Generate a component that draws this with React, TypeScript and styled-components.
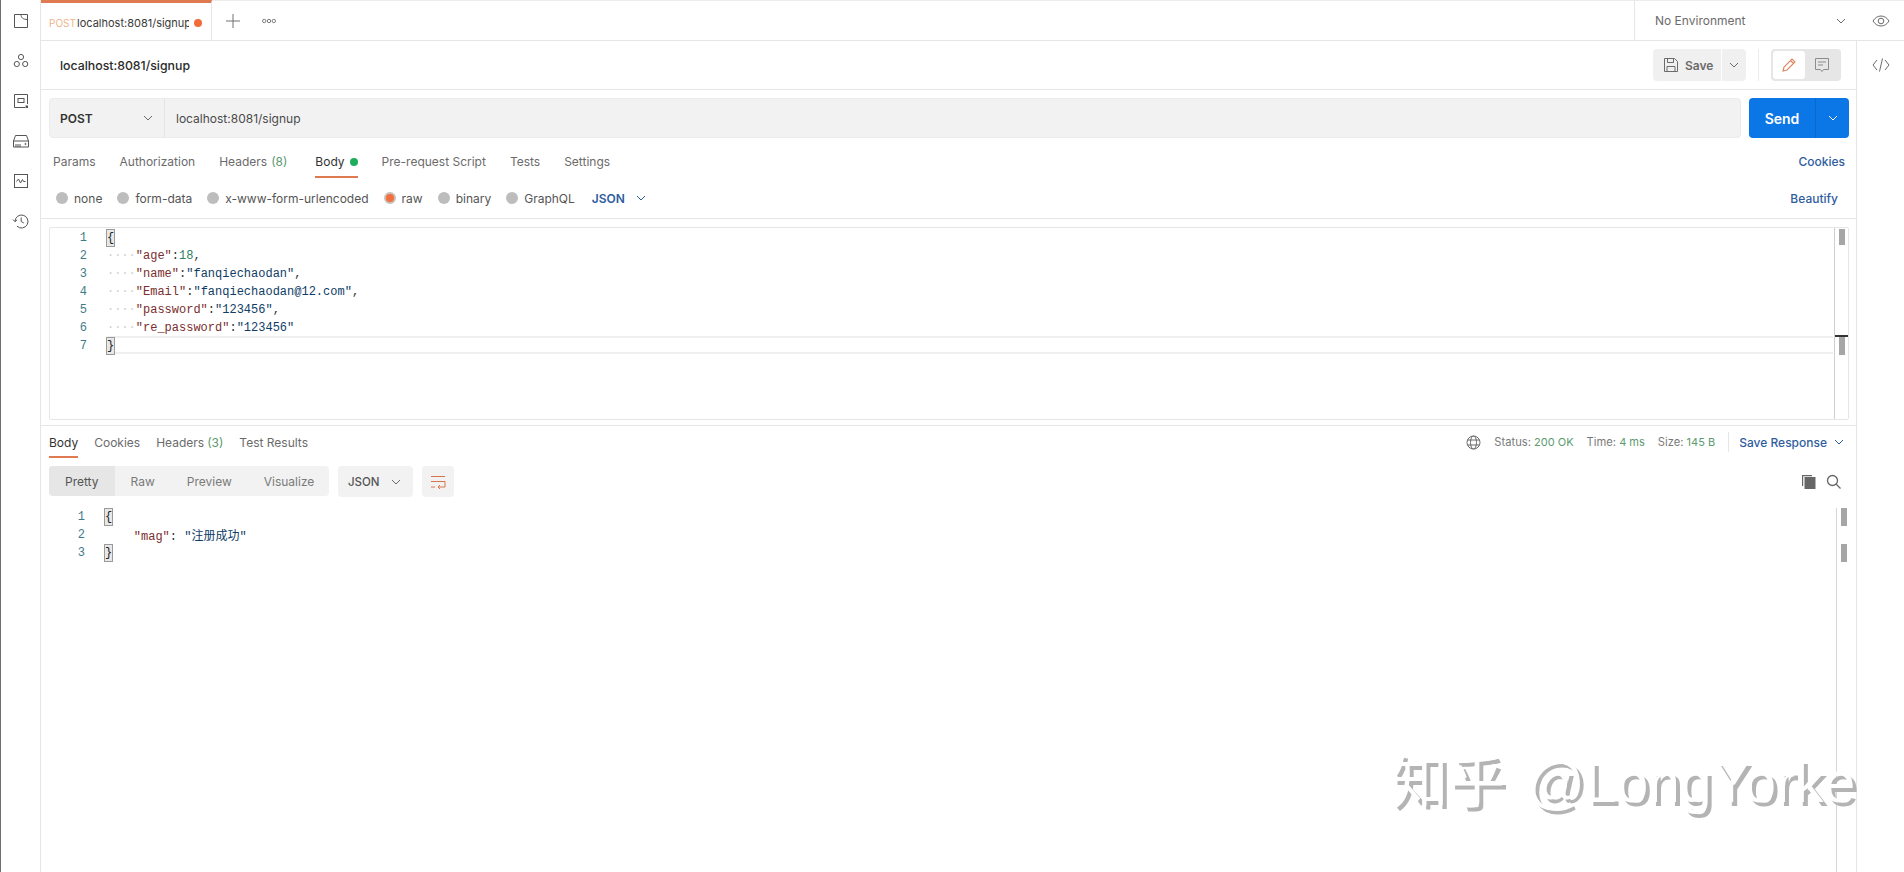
import React from "react";
import styled, { createGlobalStyle } from "styled-components";

const GlobalStyle = createGlobalStyle`
  html, body { margin: 0; padding: 0; background: #fff; }
  body { font-family: Inter, "Noto Sans", sans-serif; font-size: 12px; color: #212121; }
  * { box-sizing: border-box; }
`;

const Chevron = ({ color = "#6b6b6b" }: { color?: string }) => (
  <svg width="12" height="12" viewBox="0 0 12 12" fill="none" stroke={color} strokeWidth="1">
    <path d="M2 4l4 4 4-4" />
  </svg>
);

const sideIcons = [
  <path key="a" d="M2.5 2.5h13v13h-13zM9 2.5c0 3 2 5 6.5 5" />,
  <g key="b"><circle cx="9" cy="5" r="2.6" /><circle cx="4.8" cy="12" r="2.6" /><circle cx="13.2" cy="12" r="2.6" /></g>,
  <g key="c"><path d="M13 15.5H2.5v-13h13V12" /><rect x="6" y="6.5" width="6" height="4" /><rect x="13.5" y="13.5" width="2.5" height="2.5" fill="#555" stroke="none" /></g>,
  <g key="d"><path d="M1.5 9l2-5.5h11l2 5.5v6h-15zM1.5 9h15M4 15v-3M6 15v-3M8 15v-3" /><circle cx="13.5" cy="12" r=".6" /></g>,
  <g key="e"><rect x="2.5" y="2.5" width="13" height="13" /><path d="M4.5 9.5l2-2.5 2 4 2-3.5 1 2h2" /></g>,
  <g key="f"><path d="M3 9.5a6.5 6.5 0 1 1 2 4.7M1 7.5l2 2.2 2.2-2M9.2 5.5v4l2.6 1.5" /></g>,
];

function App() {
  return (
    <>
      <GlobalStyle />
      <Page>
        <Sidebar>
          {sideIcons.map((icon, i) => (
            <SideIcon key={i} width="18" height="18" viewBox="0 0 18 18">{icon}</SideIcon>
          ))}
        </Sidebar>

        <Content>
          <TabBar>
            <ActiveTab>
              <TabMethod>POST</TabMethod>
              <TabUrl>localhost:8081/signup</TabUrl>
              <Dot $color="#f26b3a" $size={8} $gap={5} />
            </ActiveTab>
            <PlusIcon width="14" height="14" viewBox="0 0 14 14"><path d="M7 0v14M0 7h14" /></PlusIcon>
            <MoreIcon width="14" height="6" viewBox="0 0 14 6">
              <circle cx="2.2" cy="3" r="1.7" /><circle cx="7" cy="3" r="1.7" /><circle cx="11.8" cy="3" r="1.7" />
            </MoreIcon>
            <EnvPicker>
              <EnvLabel>No Environment</EnvLabel>
              <Chevron />
            </EnvPicker>
            <EyeBox>
              <GreyIcon width="18" height="18" viewBox="0 0 18 18">
                <path d="M1 9c2-3.4 5-5 8-5s6 1.6 8 5c-2 3.4-5 5-8 5s-6-1.6-8-5z" />
                <circle cx="9" cy="9" r="2.8" />
              </GreyIcon>
            </EyeBox>
          </TabBar>

          <Body>
            <Main>
              <TitleRow>
                <Title>localhost:8081/signup</Title>
                <SaveGroup>
                  <SaveButton>
                    <GreyIcon width="16" height="16" viewBox="0 0 16 16">
                      <path d="M1.5 1.5h10l3 3v10h-13zM4.5 1.5v4h6v-4M4 14.5v-5h8v5" />
                    </GreyIcon>
                    Save
                  </SaveButton>
                  <SaveCaret><Chevron /></SaveCaret>
                </SaveGroup>
                <VDivider />
                <ModeToggle>
                  <ModeActive>
                    <svg width="16" height="16" viewBox="0 0 16 16" fill="none" stroke="#d9875f" strokeWidth="1.1">
                      <path d="M2 14l1-4 8-8 3 3-8 8zM9.5 3.5l3 3" />
                    </svg>
                  </ModeActive>
                  <ModeIdle>
                    <svg width="16" height="16" viewBox="0 0 16 16" fill="none" stroke="#8c8c8c" strokeWidth="1">
                      <path d="M1.5 1.5h13v11H9.5L8 14.5l-1.5-2h-5zM4 5h8M4 8h5" />
                    </svg>
                  </ModeIdle>
                </ModeToggle>
              </TitleRow>

              <UrlRow>
                <UrlBox>
                  <MethodSelect>
                    POST
                    <Chevron />
                  </MethodSelect>
                  <UrlText>localhost:8081/signup</UrlText>
                </UrlBox>
                <SendGroup>
                  <SendLabel>Send</SendLabel>
                  <SendCaret><Chevron color="#fff" /></SendCaret>
                </SendGroup>
              </UrlRow>

              <RequestTabs>
                <ReqTab>Params</ReqTab>
                <ReqTab>Authorization</ReqTab>
                <ReqTab>Headers <Count>(8)</Count></ReqTab>
                <ReqTab $active>Body <Dot $color="#1ead5c" $size={8} $gap={1} /></ReqTab>
                <ReqTab>Pre-request Script</ReqTab>
                <ReqTab>Tests</ReqTab>
                <ReqTab>Settings</ReqTab>
                <CookiesLink>Cookies</CookiesLink>
              </RequestTabs>

              <BodyTypes>
                <RadioItem><Radio />none</RadioItem>
                <RadioItem><Radio />form-data</RadioItem>
                <RadioItem><Radio />x-www-form-urlencoded</RadioItem>
                <RadioItem><Radio $on />raw</RadioItem>
                <RadioItem><Radio />binary</RadioItem>
                <RadioItem><Radio />GraphQL</RadioItem>
                <LangSelect>JSON <Chevron color="#2f5d9e" /></LangSelect>
                <BeautifyLink>Beautify</BeautifyLink>
              </BodyTypes>

              <EditorWrap>
                <Line><Num>1</Num><Code><Bracket>{"{"}</Bracket></Code></Line>
                <Line><Num>2</Num><Code><Ws>····</Ws><Key>"age"</Key>:<NumVal>18</NumVal>,</Code></Line>
                <Line><Num>3</Num><Code><Ws>····</Ws><Key>"name"</Key>:<Str>"fanqiechaodan"</Str>,</Code></Line>
                <Line><Num>4</Num><Code><Ws>····</Ws><Key>"Email"</Key>:<Str>"fanqiechaodan@12.com"</Str>,</Code></Line>
                <Line><Num>5</Num><Code><Ws>····</Ws><Key>"password"</Key>:<Str>"123456"</Str>,</Code></Line>
                <Line><Num>6</Num><Code><Ws>····</Ws><Key>"re_password"</Key>:<Str>"123456"</Str></Code></Line>
                <Line><Num>7</Num><CurrentCode><Bracket>{"}"}</Bracket></CurrentCode></Line>
                <ScrollTrack>
                  <Thumb $top={1} $height={16} />
                  <CursorMark />
                  <Thumb $top={109} $height={18} />
                </ScrollTrack>
              </EditorWrap>

              <ResponseTabs>
                <ResTab $active>Body</ResTab>
                <ResTab>Cookies</ResTab>
                <ResTab>Headers <Count>(3)</Count></ResTab>
                <ResTab>Test Results</ResTab>
                <StatusBar>
                  <GreyIcon width="15" height="15" viewBox="0 0 15 15">
                    <circle cx="7.5" cy="7.5" r="6.5" />
                    <ellipse cx="7.5" cy="7.5" rx="3" ry="6.5" />
                    <path d="M1.5 5h12M1.5 10h12" />
                  </GreyIcon>
                  <StatusItem>Status: <Good>200 OK</Good></StatusItem>
                  <StatusItem>Time: <Good>4 ms</Good></StatusItem>
                  <StatusItem>Size: <Good>145 B</Good></StatusItem>
                  <StatusDivider />
                  <SaveResponse>Save Response</SaveResponse>
                  <Chevron color="#2f5d9e" />
                </StatusBar>
              </ResponseTabs>

              <ResponseTools>
                <Segments>
                  <Segment $active>Pretty</Segment>
                  <Segment>Raw</Segment>
                  <Segment>Preview</Segment>
                  <Segment>Visualize</Segment>
                </Segments>
                <FormatSelect>JSON <Chevron /></FormatSelect>
                <WrapButton>
                  <svg width="16" height="16" viewBox="0 0 16 16" fill="none" stroke="#d9744a" strokeWidth="1">
                    <path d="M1 2.5h14M1 7.5h14M1 13h4M15 7.5v5.5h-7M10 11l-2 2 2 2" />
                  </svg>
                </WrapButton>
                <ToolIcons>
                  <svg width="15" height="15" viewBox="0 0 15 15" fill="#666">
                    <path d="M3.5 3h11v12h-11z" /><path d="M1 1h10v1.2H2.2V12H1z" />
                  </svg>
                  <svg width="15" height="15" viewBox="0 0 15 15" fill="none" stroke="#666" strokeWidth="1.3">
                    <circle cx="6.5" cy="6.5" r="5" /><path d="M10 10l4.5 4.5" />
                  </svg>
                </ToolIcons>
              </ResponseTools>

              <ResponseBody>
                <ResLine><ResNum>1</ResNum><Code><Bracket>{"{"}</Bracket></Code></ResLine>
                <ResLine><ResNum>2</ResNum><Code>{"    "}<Key>"mag"</Key>: <Str>"注册成功"</Str></Code></ResLine>
                <ResLine><ResNum>3</ResNum><Code><Bracket>{"}"}</Bracket></Code></ResLine>
                <ResTrack>
                  <Thumb $top={0} $height={18} />
                  <Thumb $top={36} $height={18} />
                </ResTrack>
              </ResponseBody>
            </Main>

            <RightRail>
              <GreyIcon width="18" height="14" viewBox="0 0 18 14">
                <path d="M5 2L1 7l4 5M13 2l4 5-4 5M10.5 0.5l-3 13" />
              </GreyIcon>
            </RightRail>
          </Body>
        </Content>

        <Watermark>知乎 @LongYorke</Watermark>
      </Page>
    </>
  );
}

const Page = styled.div`
  position: relative;
  display: flex;
  width: 1904px;
  height: 872px;
  overflow: hidden;
  border-left: 1px solid #6e6e6e;
  background: #fff;
`;

const Sidebar = styled.nav`
  width: 40px;
  flex: none;
  display: flex;
  flex-direction: column;
  align-items: center;
  gap: 22px;
  padding-top: 12px;
  border-right: 1px solid #e6e6e6;
`;

const SideIcon = styled.svg`
  fill: none;
  stroke: #555;
  stroke-width: 1;
`;

const GreyIcon = styled.svg`
  flex: none;
  fill: none;
  stroke: #6b6b6b;
  stroke-width: 1;
`;

const Content = styled.div`
  flex: 1;
  min-width: 0;
  display: flex;
  flex-direction: column;
`;

const TabBar = styled.div`
  height: 41px;
  flex: none;
  display: flex;
  align-items: center;
  border-top: 1px solid #ececec;
  border-bottom: 1px solid #e6e6e6;
`;

const ActiveTab = styled.div`
  width: 171px;
  height: 40px;
  margin-top: -1px;
  display: flex;
  align-items: center;
  padding: 3px 9px 0 8px;
  border-top: 3px solid #e07a52;
  border-right: 1px solid #e6e6e6;
`;

const TabMethod = styled.span`
  font-size: 10px;
  color: #f0b48f;
  width: 28px;
  flex: none;
`;

const TabUrl = styled.span`
  width: 112px;
  flex: none;
  overflow: hidden;
  white-space: nowrap;
  font-size: 11px;
  color: #3a3a3a;
`;

const Dot = styled.span<{ $color: string; $size: number; $gap: number }>`
  display: inline-block;
  flex: none;
  width: ${(p) => p.$size}px;
  height: ${(p) => p.$size}px;
  margin-left: ${(p) => p.$gap}px;
  border-radius: 50%;
  background: ${(p) => p.$color};
`;

const PlusIcon = styled.svg`
  margin-left: 14px;
  fill: none;
  stroke: #707070;
  stroke-width: 1;
`;

const MoreIcon = styled.svg`
  margin-left: 22px;
  fill: none;
  stroke: #707070;
  stroke-width: 0.9;
`;

const EnvPicker = styled.div`
  margin-left: auto;
  width: 223px;
  height: 39px;
  display: flex;
  align-items: center;
  justify-content: space-between;
  padding: 0 10px 0 20px;
  border-left: 1px solid #e6e6e6;
`;

const EnvLabel = styled.span`
  font-size: 12px;
  color: #6b6b6b;
`;

const EyeBox = styled.div`
  width: 47px;
  display: flex;
  justify-content: center;
`;

const Body = styled.div`
  flex: 1;
  min-height: 0;
  display: flex;
`;

const Main = styled.main`
  width: 1816px;
  flex: none;
  display: flex;
  flex-direction: column;
  border-right: 1px solid #e6e6e6;
`;

const RightRail = styled.aside`
  flex: 1;
  display: flex;
  justify-content: center;
  padding-top: 17px;
`;

const TitleRow = styled.div`
  height: 49px;
  flex: none;
  display: flex;
  align-items: center;
  padding: 0 15px 0 19px;
  border-bottom: 1px solid #e6e6e6;
`;

const Title = styled.h1`
  margin: 0 auto 0 0;
  font-size: 12.3px;
  font-weight: 500;
  color: #2b2b2b;
`;

const SaveGroup = styled.div`
  display: flex;
  gap: 1px;
  height: 32px;
`;

const SaveButton = styled.div`
  width: 68px;
  display: flex;
  align-items: center;
  gap: 6px;
  padding-left: 10px;
  border-radius: 4px 0 0 4px;
  background: #f0f0f0;
  color: #6b6b6b;
  font-weight: 600;
`;

const SaveCaret = styled.div`
  width: 24px;
  display: flex;
  align-items: center;
  justify-content: center;
  border-radius: 0 4px 4px 0;
  background: #f0f0f0;
`;

const VDivider = styled.div`
  width: 1px;
  height: 32px;
  margin: 0 12px;
  background: #ececec;
`;

const ModeToggle = styled.div`
  width: 70px;
  height: 32px;
  display: flex;
  padding: 2px;
  border-radius: 4px;
  background: #e6e6e6;
`;

const ModeActive = styled.div`
  width: 32px;
  display: flex;
  align-items: center;
  justify-content: center;
  border-radius: 3px;
  background: #fff;
`;

const ModeIdle = styled.div`
  flex: 1;
  display: flex;
  align-items: center;
  justify-content: center;
`;

const UrlRow = styled.div`
  flex: none;
  display: flex;
  gap: 8px;
  padding: 8px 7px 0 8px;
`;

const UrlBox = styled.div`
  flex: 1;
  height: 40px;
  display: flex;
  align-items: center;
  border: 1px solid #ebebeb;
  border-radius: 4px;
  background: #f2f2f2;
`;

const MethodSelect = styled.div`
  width: 115px;
  height: 38px;
  flex: none;
  display: flex;
  align-items: center;
  justify-content: space-between;
  padding: 0 10px;
  border-right: 1px solid #e4e4e4;
  font-weight: 600;
  font-size: 12px;
  color: #333;
`;

const UrlText = styled.span`
  margin-left: 11px;
  font-size: 12px;
  color: #4a4a4a;
`;

const SendGroup = styled.div`
  width: 100px;
  height: 40px;
  flex: none;
  display: flex;
  border-radius: 4px;
  background: #0b76e6;
  color: #fff;
`;

const SendLabel = styled.div`
  width: 67px;
  display: flex;
  align-items: center;
  justify-content: center;
  border-right: 1px solid #0a69cc;
  font-size: 14px;
  font-weight: 600;
`;

const SendCaret = styled.div`
  flex: 1;
  display: flex;
  align-items: center;
  justify-content: center;
`;

const RequestTabs = styled.div`
  height: 40px;
  flex: none;
  display: flex;
  align-items: stretch;
  gap: 24px;
  padding-left: 12px;
`;

const ReqTab = styled.div<{ $active?: boolean }>`
  display: flex;
  align-items: center;
  gap: 4px;
  height: 40px;
  padding-top: 9px;
  margin-left: ${(p) => (p.$active ? 4 : 0)}px;
  color: ${(p) => (p.$active ? "#333" : "#6b6b6b")};
  border-bottom: 2px solid ${(p) => (p.$active ? "#e07a52" : "transparent")};
  white-space: nowrap;
`;

const Count = styled.span`
  color: #5c9a70;
`;

const CookiesLink = styled.span`
  margin: 0 11px 0 auto;
  align-self: center;
  padding-top: 7px;
  color: #2f5d9e;
  font-weight: 500;
`;

const BeautifyLink = styled.span`
  margin: 0 18px 0 auto;
  color: #2f5d9e;
  font-weight: 500;
`;

const BodyTypes = styled.div`
  height: 41px;
  flex: none;
  display: flex;
  align-items: center;
  gap: 15px;
  padding-left: 15px;
  border-bottom: 1px solid #e6e6e6;
`;

const RadioItem = styled.label`
  display: flex;
  align-items: center;
  gap: 6px;
  color: #555;
`;

const Radio = styled.span<{ $on?: boolean }>`
  width: 12px;
  height: 12px;
  border-radius: 50%;
  background: ${(p) => (p.$on ? "#f2703d" : "#bdbdbd")};
  border: ${(p) => (p.$on ? "2px solid #c9bfb9" : "none")};
`;

const LangSelect = styled.span`
  display: flex;
  align-items: center;
  gap: 10px;
  margin-left: 2px;
  color: #2f5d9e;
  font-weight: 600;
`;

const EditorWrap = styled.div`
  position: relative;
  height: 193px;
  flex: none;
  margin: 8px 7px 0 8px;
  padding-right: 15px;
  border: 1px solid #e6e6e6;
  border-radius: 2px;
`;

const Line = styled.div`
  display: flex;
  height: 18px;
  align-items: center;

  & > span,
  & > code {
    padding-top: 2px;
  }
`;

const Num = styled.span`
  width: 37px;
  flex: none;
  text-align: right;
  font-family: "Liberation Mono", monospace;
  font-size: 12px;
  color: #3f7c8a;
`;

const Code = styled.code`
  margin-left: 20px;
  font-family: "Liberation Mono", "Noto Sans CJK SC", monospace;
  font-size: 12px;
  color: #333;
  white-space: pre;
`;

const CurrentCode = styled(Code)`
  flex: 1;
  height: 18px;
  display: flex;
  align-items: center;
  box-shadow: inset 0 2px 0 #efefef, inset 0 -2px 0 #efefef;
`;

const Bracket = styled.span`
  display: inline-block;
  width: 7px;
  height: 16px;
  line-height: 16px;
  background: #e8e8e8;
  outline: 1px solid #9a9a9a;
  color: #222;
`;

const Ws = styled.span`
  color: #cfcfcf;
`;

const Key = styled.span`
  color: #7a2e2e;
`;

const Str = styled.span`
  color: #0f3d66;
`;

const NumVal = styled.span`
  color: #2f7f5f;
`;

const ScrollTrack = styled.div`
  position: absolute;
  top: 0;
  bottom: 0;
  right: 0;
  width: 14px;
  border-left: 1px solid #cfcfcf;
`;

const Thumb = styled.div<{ $top: number; $height: number }>`
  position: absolute;
  top: ${(p) => p.$top}px;
  left: 4px;
  width: 6px;
  height: ${(p) => p.$height}px;
  background: #a6a6a6;
`;

const CursorMark = styled.div`
  position: absolute;
  top: 107px;
  left: 0;
  width: 13px;
  height: 2px;
  background: #333;
`;

const ResponseTabs = styled.div`
  height: 38px;
  flex: none;
  display: flex;
  align-items: flex-start;
  gap: 16px;
  margin-top: 5px;
  padding: 0 11px 0 8px;
  border-top: 1px solid #e6e6e6;
`;

const ResTab = styled.div<{ $active?: boolean }>`
  display: flex;
  align-items: center;
  gap: 3px;
  height: 32px;
  padding-top: 2px;
  white-space: nowrap;
  color: ${(p) => (p.$active ? "#333" : "#6b6b6b")};
  border-bottom: 2px solid ${(p) => (p.$active ? "#e07a52" : "transparent")};
`;

const StatusBar = styled.div`
  margin-left: auto;
  display: flex;
  align-items: center;
  height: 32px;
  color: #7a7a7a;
  font-size: 11.2px;
`;

const StatusItem = styled.span`
  margin-left: 13px;
  white-space: pre;
`;

const Good = styled.span`
  color: #5c9a70;
  font-size: 11px;
`;

const StatusDivider = styled.span`
  width: 1px;
  height: 20px;
  margin: 0 10px 0 13px;
  background: #e6e6e6;
`;

const SaveResponse = styled.span`
  margin-right: 6px;
  font-size: 12px;
  font-weight: 500;
  color: #2f5d9e;
`;

const ResponseTools = styled.div`
  flex: none;
  display: flex;
  align-items: flex-start;
  gap: 9px;
  padding: 3px 15px 0 8px;
  height: 34px;
`;

const Segments = styled.div`
  width: 280px;
  height: 30px;
  display: flex;
  border-radius: 4px;
  overflow: hidden;
  background: #f2f2f2;
`;

const Segment = styled.div<{ $active?: boolean }>`
  display: flex;
  align-items: center;
  padding: 0 16px;
  color: ${(p) => (p.$active ? "#555" : "#7a7a7a")};
  background: ${(p) => (p.$active ? "#e6e6e6" : "transparent")};
`;

const FormatSelect = styled.div`
  width: 75px;
  height: 31px;
  display: flex;
  align-items: center;
  justify-content: space-between;
  padding: 0 11px 0 10px;
  border-radius: 4px;
  background: #f2f2f2;
  color: #555;
  font-size: 11.5px;
  font-weight: 500;
`;

const WrapButton = styled.div`
  width: 32px;
  height: 31px;
  display: flex;
  align-items: center;
  justify-content: center;
  border-radius: 4px;
  background: #f2f2f2;
`;

const ToolIcons = styled.div`
  margin-left: auto;
  height: 30px;
  display: flex;
  align-items: center;
  gap: 10px;
`;

const ResponseBody = styled.div`
  position: relative;
  flex: none;
  padding-top: 11px;
`;

const ResLine = styled.div`
  display: flex;
  height: 18px;
  align-items: center;
`;

const ResNum = styled(Num)`
  width: 44px;
`;

const ResTrack = styled.div`
  position: absolute;
  top: 11px;
  right: 7px;
  width: 13px;
  height: 420px;
  border-left: 1px solid #d6d6d6;
`;

const Watermark = styled.div`
  position: absolute;
  left: 1390px;
  top: 750px;
  font-family: "Liberation Sans", "Noto Sans CJK SC", sans-serif;
  font-size: 57px;
  line-height: 64px;
  word-spacing: 6px;
  white-space: nowrap;
  color: #fff;
  text-shadow: 4px 4px 0 #b4b4b4;
`;

export default App;
